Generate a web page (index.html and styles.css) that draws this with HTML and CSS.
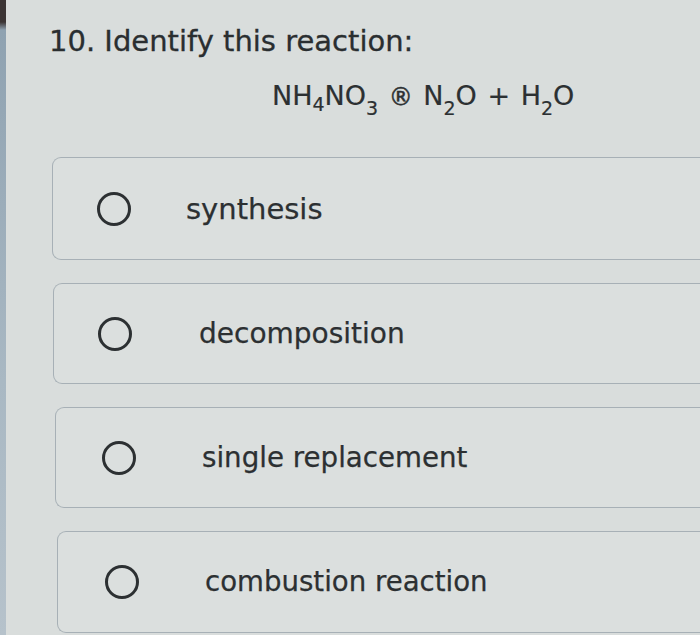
FILE: index.html
```html
<!DOCTYPE html>
<html lang="en">
<head>
<meta charset="utf-8">
<title>Question 10</title>
<link rel="stylesheet" href="styles.css">
</head>
<body>
<div class="screen">
  <div class="edge"></div>
  <main class="question">
    <h1 class="prompt">10. Identify this reaction:</h1>
    <p class="formula">NH<sub class="hi">4</sub>NO<sub>3</sub> <span class="reg">®</span> N<sub>2</sub>O + H<sub>2</sub>O</p>
    <div class="options">
      <label class="option opt-1"><span class="radio"></span><span class="label">synthesis</span></label>
      <label class="option opt-2"><span class="radio"></span><span class="label">decomposition</span></label>
      <label class="option opt-3"><span class="radio"></span><span class="label">single replacement</span></label>
      <label class="option opt-4"><span class="radio"></span><span class="label">combustion reaction</span></label>
    </div>
  </main>
</div>
</body>
</html>
```
FILE: styles.css
```css
html, body {
  margin: 0;
  padding: 0;
  height: 100%;
  overflow: hidden;
}
body {
  background: #d9dddc;
  font-family: "DejaVu Sans", Verdana, sans-serif;
  color: #2c3032;
}
.screen {
  display: flex;
  height: 635px;
}
.edge {
  flex: 0 0 6px;
  background: linear-gradient(to bottom, #3b3434 0, #3b3434 22px, #8fa2b1 30px, #a9b8c3 60%, #b6c2cb 100%);
}
.question {
  flex: 1;
  padding-left: 43px;
  padding-top: 24px;
}
.prompt {
  margin: 0;
  font-size: 29px;
  line-height: 34px;
  font-weight: normal;
  color: #2a2e30;
  -webkit-text-stroke: 0.3px #2a2e30;
}
.formula {
  margin: 21px 0 0 223px;
  height: 34px;
  font-size: 27px;
  line-height: 34px;
  word-spacing: 2px;
  white-space: nowrap;
  -webkit-text-stroke: 0.2px #2c3032;
}
.formula sub {
  display: inline-block;
  font-size: 19px;
  line-height: 19px;
  vertical-align: -10px;
}
.formula sub.hi {
  vertical-align: -6px;
}
.formula .reg {
  font-size: 24px;
  -webkit-text-stroke: 0.5px #2c3032;
}
.options {
  margin-top: 44px;
  display: flex;
  flex-direction: column;
  gap: 23px;
  margin-right: -30px;
}
.option {
  display: flex;
  align-items: center;
  box-sizing: border-box;
  border: 1.5px solid #a7b0b6;
  border-right: none;
  border-radius: 9px 0 0 9px;
  background: #dbdfde;
}
.radio {
  flex: 0 0 auto;
  width: 28px;
  height: 28px;
  border: 3px solid #2c3032;
  border-radius: 50%;
}
.label {
  font-size: 28px;
  line-height: 34px;
  -webkit-text-stroke: 0.25px #2c3032;
}
.opt-1 { margin-left: 3px; height: 103px; }
.opt-2 { margin-left: 4px; height: 101px; }
.opt-3 { margin-left: 6px; height: 101px; }
.opt-4 { margin-left: 8px; height: 102px; }
.opt-1 .radio { margin-left: 44px; }
.opt-2 .radio { margin-left: 44px; }
.opt-3 .radio { margin-left: 46px; }
.opt-4 .radio { margin-left: 47px; }
.opt-1 .label { margin-left: 55px; font-size: 29px; }
.opt-2 .label { margin-left: 67px; }
.opt-3 .label { margin-left: 66px; font-size: 27.7px; }
.opt-4 .label { margin-left: 66px; font-size: 27.6px; }
```
